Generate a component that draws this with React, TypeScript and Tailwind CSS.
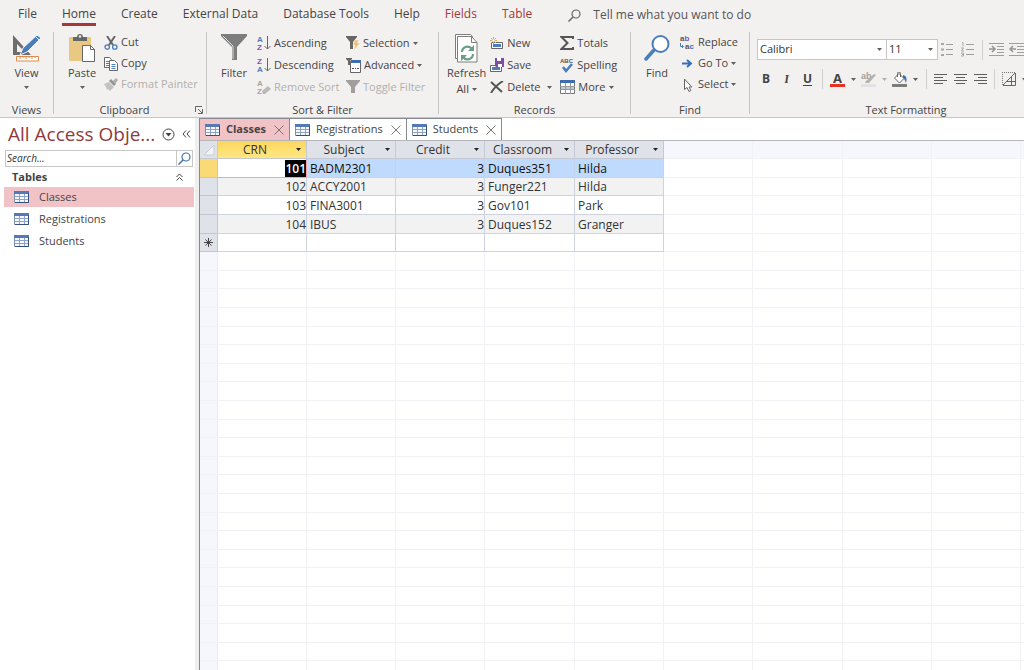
import type { ReactNode } from "react";
import { clsx } from "clsx";

const COLUMNS = ["CRN", "Subject", "Credit", "Classroom", "Professor"];

const COLUMN_WIDTHS = [
  "w-[89px]",
  "w-[89px]",
  "w-[89px]",
  "w-[90px]",
  "w-[89px]",
  "w-[89px]",
  "w-[90px]",
  "w-[89px]",
  "w-[89px]",
  "w-[90px]",
];

const ROW_HEIGHTS = [
  "h-[19px]",
  "h-[18px]",
  "h-[19px]",
  "h-[19px]",
  "h-[18px]",
];

const RECORDS = [
  ["101", "BADM2301", "3", "Duques351", "Hilda"],
  ["102", "ACCY2001", "3", "Funger221", "Hilda"],
  ["103", "FINA3001", "3", "Gov101", "Park"],
  ["104", "IBUS", "3", "Duques152", "Granger"],
];

const OBJECTS = ["Classes", "Registrations", "Students"];

/* ---------- Icons ---------- */

const Svg = ({
  w,
  h,
  children,
}: {
  w: number;
  h: number;
  children: ReactNode;
}) => (
  <svg
    width={w}
    height={h}
    viewBox={`0 0 ${w} ${h}`}
    fill="none"
    className="shrink-0"
    aria-hidden="true"
  >
    {children}
  </svg>
);

const Caret = ({ className = "text-[#605e5c]" }: { className?: string }) => (
  <svg
    width="5"
    height="3"
    viewBox="0 0 5 3"
    fill="currentColor"
    className={clsx("shrink-0", className)}
    aria-hidden="true"
  >
    <path d="M0 0h5L2.5 3z" />
  </svg>
);

const ViewIcon = () => (
  <Svg w={28} h={28}>
    <path d="M0 1v20h18zM4 10l8 8H4z" fill="#6d6d6d" fillRule="evenodd" />
    <path d="M7 21l3-7L24 1l4 3L14 18z" fill="#4a7ebb" stroke="#f3f1f0" />
    <path d="M22 2l4 4" stroke="#f3f1f0" />
    <path d="M3.500 22.500h22v4.500h-22z" fill="#fff" stroke="#dd8a4b" />
    <path d="M7 22v3M10 22v2M13 22v3M16 22v2M19 22v3M22 22v2" stroke="#dd8a4b" />
  </Svg>
);

const PasteIcon = () => (
  <Svg w={28} h={28}>
    <rect x="1" y="3" width="22" height="24" rx="1" fill="#e8c883" />
    <path d="M5 7V3h4c0-4 6-4 6 0h4v4z" fill="#666" />
    <circle cx="12" cy="2.500" r="1.200" fill="#f3f1f0" />
    <path d="M14.500 11.500h8l4 4v12h-12z" fill="#fff" stroke="#666" />
    <path d="M22.500 11.500v4h4" stroke="#666" />
  </Svg>
);

const CutIcon = () => (
  <Svg w={14} h={14}>
    <path d="M3 0l6 9M11 0L5 9" stroke="#666" strokeWidth="2" />
    <circle cx="3.200" cy="11" r="2.200" stroke="#4a7ebb" strokeWidth="1.300" />
    <circle cx="10.800" cy="11" r="2.200" stroke="#4a7ebb" strokeWidth="1.300" />
  </Svg>
);

const CopyIcon = () => (
  <Svg w={14} h={14}>
    <path d="M.5.500h5l2 2v8h-7z" fill="#fff" stroke="#666" />
    <path d="M2 4.500h3M2 6.500h3M2 8.500h3" stroke="#4a7ebb" />
    <path d="M5.500 3.500h5l3 3v7h-8z" fill="#fff" stroke="#666" />
    <path d="M7.500 7.500h4M7.500 9.500h4M7.500 11.500h4" stroke="#4a7ebb" />
  </Svg>
);

const PainterIcon = () => (
  <Svg w={14} h={13}>
    <path d="M0 6l5-2 5 5-4 4-2-2-1 1-1-3z" fill="#c4c2c1" />
    <path d="M5 3l2-2 5 5-2 2z" fill="#979593" />
    <path d="M9 3l3-3 2 2-3 4z" fill="#b0aeac" />
  </Svg>
);

const FunnelIcon = () => (
  <Svg w={26} h={27}>
    <path d="M0 0h26v2L16 13v13h-5V13L0 2z" fill="#7d7d7d" />
    <path d="M2 2l10 10v13" stroke="#ddd" />
  </Svg>
);

const SortIcon = ({ reverse }: { reverse?: boolean }) => (
  <Svg w={14} h={16}>
    <g fontFamily="Liberation Sans" fontSize="8" fontWeight="bold">
      <text x="0" y="7" fill={reverse ? "#8654a8" : "#4a7ebb"}>
        {reverse ? "Z" : "A"}
      </text>
      <text x="0" y="15" fill={reverse ? "#4a7ebb" : "#8654a8"}>
        {reverse ? "A" : "Z"}
      </text>
    </g>
    <path d="M10.500 1v13M7.500 11l3 3 3-3" stroke="#666" />
  </Svg>
);

const RemoveSortIcon = () => (
  <Svg w={14} h={16}>
    <g
      fontFamily="Liberation Sans"
      fontSize="8"
      fontWeight="bold"
      fill="#a5a3a1"
    >
      <text x="0" y="7">
        A
      </text>
      <text x="0" y="15">
        Z
      </text>
    </g>
    <path d="M5 12l6-5 3 3-6 5H6z" fill="#bcbab8" />
  </Svg>
);

const SelectionIcon = () => (
  <Svg w={14} h={14}>
    <path d="M0 0h11v1L7 6v7H4V6L0 1z" fill="#666" />
    <path d="M9 4h4l-2 3h3l-6 7 1-5H7z" fill="#ecc06c" stroke="#f3f1f0" strokeWidth=".5" />
  </Svg>
);

const AdvancedIcon = () => (
  <Svg w={15} h={15}>
    <path d="M0 0h6v1L4 3v4H2V3L0 1z" fill="#666" />
    <path d="M4.500 3.500h10v11h-10z" fill="#fff" stroke="#666" />
    <path d="M5 2h10v3H5z" fill="#3d6fb0" />
    <path d="M6 10.500h2M9 10.500h1M11 10.500h2" stroke="#555" />
  </Svg>
);

const ToggleFilterIcon = () => (
  <Svg w={14} h={14}>
    <path d="M0 0h14v1L9 7v6H5V7L0 1z" fill="#a19f9d" />
  </Svg>
);

const RefreshIcon = () => (
  <Svg w={23} h={29}>
    <path d="M.5.500h15l2 2v22H.5z" fill="#fff" stroke="#7d7d7d" />
    <path d="M2.500 2.500h14l5.500 6v19.500H2.500z" fill="#fff" stroke="#7d7d7d" />
    <path d="M16.500 2.500v6H22" stroke="#7d7d7d" />
    <path d="M7 18a5.500 5.500 0 0 1 10-3M18 20a5.500 5.500 0 0 1-10 3" stroke="#6b9f89" strokeWidth="2.200" />
    <path d="M19 11v6h-6zM6 27v-6h6z" fill="#6b9f89" />
  </Svg>
);

const NewIcon = () => (
  <Svg w={14} h={13}>
    <path d="M1.500 5.500h11v6h-11z" fill="#fff" stroke="#666" />
    <path d="M3 7h8v3H3z" fill="#4a7ebb" />
    <path d="M3.500 0v7M0 3.500h7M1 1l5 5M6 1L1 6" stroke="#e5a94f" />
    <circle cx="3.500" cy="3.500" r="1.200" fill="#fff" />
  </Svg>
);

const SaveIcon = () => (
  <Svg w={14} h={14}>
    <path d="M.5 7.500h11v6H.5z" fill="#fff" stroke="#666" />
    <path d="M2 9h8v3H2z" fill="#4a7ebb" />
    <path d="M5 0h9v9H6L5 8z" fill="#7e4ea3" />
    <path d="M7 0h4v3H7zM8 6h4v3H8z" fill="#fff" />
  </Svg>
);

const DeleteIcon = () => (
  <Svg w={14} h={12}>
    <path d="M1 1l11 10M13 0C8 3 4 7 1 12" stroke="#555" strokeWidth="2" />
  </Svg>
);

const TotalsIcon = () => (
  <Svg w={14} h={14}>
    <path d="M13 3V1H1.500l6 6-6 6H13v-2" stroke="#555" strokeWidth="2" />
  </Svg>
);

const SpellingIcon = () => (
  <Svg w={14} h={15}>
    <text x="0" y="5" fontFamily="Liberation Sans" fontSize="6" fontWeight="bold" fill="#555">
      ABC
    </text>
    <path d="M3 9l3 4 6-7" stroke="#4a7ebb" strokeWidth="2.500" />
  </Svg>
);

const MoreIcon = () => (
  <Svg w={15} h={14}>
    <path d="M.5.500h14v13H.5z" fill="#fff" stroke="#777" />
    <path d="M0 0h15v3H0z" fill="#3d6fb0" />
    <path d="M1 6h13v4H1z" fill="#b5cbe4" />
    <path d="M0 6.500h15M0 9.500h15M5.500 3v11M10.500 3v11" stroke="#999" />
  </Svg>
);

const FindIcon = () => (
  <Svg w={26} h={27}>
    <circle cx="16.500" cy="10" r="8" fill="#fff" stroke="#4a7ebb" strokeWidth="2" />
    <path d="M10 16l-8 9" stroke="#4a7ebb" strokeWidth="3.500" strokeLinecap="round" />
  </Svg>
);

const ReplaceIcon = () => (
  <Svg w={15} h={17}>
    <g fontFamily="Liberation Sans" fontSize="8" fontWeight="bold">
      <text x="0" y="7" fill="#555">
        a<tspan fill="#8654a8">b</tspan>
      </text>
      <text x="5" y="15" fill="#555">
        a<tspan fill="#3d6fb0">c</tspan>
      </text>
    </g>
    <path d="M.5 9v3.500H3M2 11l1.500 1.500L2 14" stroke="#4a7ebb" />
  </Svg>
);

const GoToIcon = () => (
  <Svg w={15} h={9}>
    <path d="M2 4.500h8M7 1l4 3.500L7 8" stroke="#3d6fb0" strokeWidth="2" />
  </Svg>
);

const PointerIcon = () => (
  <Svg w={15} h={14}>
    <path d="M4.500 1v10.500l2.500-2 2 4 1.800-1-1.800-3.500h2.800z" fill="#fff" stroke="#666" />
  </Svg>
);

const LauncherIcon = () => (
  <Svg w={8} h={8}>
    <path d="M.5 6V.5H7M3 3l4 4M7.500 3v4.500H3" stroke="#666" />
  </Svg>
);

const BulletsIcon = () => (
  <Svg w={12} h={15}>
    <path d="M0 2h3M0 7.500h3M0 13h3" stroke="#aaa8a6" strokeWidth="2" />
    <path d="M5 2.500h7M5 7.500h7M5 12.500h7" stroke="#a19f9d" />
  </Svg>
);

const NumberingIcon = () => (
  <Svg w={13} h={15}>
    <path d="M1 .5h1v4M0 6h2.500L.5 9H3M0 11h2.500v3H0M1 12.500h1.500" stroke="#aaa8a6" />
    <path d="M5 2.500h8M5 7.500h8M5 12.500h8" stroke="#a19f9d" />
  </Svg>
);

const IndentIcon = ({ out }: { out?: boolean }) => (
  <Svg w={15} h={13}>
    <path d="M0 .5h15M8 3.500h7M8 6.500h7M8 9.500h7M0 12.500h15" stroke="#a19f9d" />
    <path
      d={out ? "M7 6H1M4 3L1 6l3 3" : "M0 6h6M3 3l3 3-3 3"}
      stroke="#979593"
      strokeWidth="1.500"
    />
  </Svg>
);

const HighlightIcon = () => (
  <Svg w={15} h={15}>
    <text x="0" y="7" fontFamily="Liberation Sans" fontSize="9" fontWeight="bold" fill="#a19f9d">
      ab
    </text>
    <path d="M5 9l8-7 2 1-7 8H4z" fill="#b5b3b1" />
    <path d="M0 12h15v3H0z" fill="#e3e1e6" />
  </Svg>
);

const BucketIcon = () => (
  <Svg w={15} h={15}>
    <path d="M2.500 6L7 1.500l5 5L7.500 11z" fill="#fff" stroke="#666" />
    <path d="M5.500 5V1.500a1.500 1.500 0 0 1 3 0V5" stroke="#666" />
    <path d="M11 3c4 1 4 4 3 8-1-2-1-4-3-5z" fill="#3d6fb0" />
    <path d="M0 12h15v3H0z" fill="#7f7d7b" />
  </Svg>
);

const AlignIcon = ({ side }: { side: "left" | "center" | "right" }) => {
  const path = {
    left: "M0 .5h13M0 3.500h9M0 6.500h13M0 9.500h9",
    center: "M0 .5h13M2 3.500h9M0 6.500h13M2 9.500h9",
    right: "M0 .5h13M4 3.500h9M0 6.500h13M4 9.500h9",
  }[side];
  return (
    <Svg w={13} h={10}>
      <path d={path} stroke="#605e5c" />
    </Svg>
  );
};

const GridlinesIcon = () => (
  <Svg w={14} h={14}>
    <path d="M.5 0v14M0 .5h14" stroke="#777" strokeDasharray="1 1" />
    <path d="M1 13.500h12.500V1M1 13L13 1M9.500 5v8M5 9.500h8" stroke="#666" />
  </Svg>
);

const TableIcon = () => (
  <Svg w={15} h={12}>
    <path d="M.5.500h14v11H.5z" fill="#f4f7fc" stroke="#7d8fae" />
    <path d="M0 0h15v3H0z" fill="#5679b5" />
    <path d="M1 5.500h13M1 8.500h13M5.500 3v8M10.500 3v8" stroke="#8fa3c4" />
    <path d="M14.500 2v9.500H1" stroke="#33507f" />
  </Svg>
);

const MagnifierIcon = ({ color }: { color: string }) => (
  <Svg w={13} h={13}>
    <circle cx="8" cy="5" r="4" stroke={color} strokeWidth="1.200" />
    <path d="M5 8l-4.500 4.500" stroke={color} strokeWidth="1.500" />
  </Svg>
);

const CloseIcon = () => (
  <Svg w={10} h={10}>
    <path d="M.5.500l9 9M9.500.500l-9 9" stroke="#777" />
  </Svg>
);

/* ---------- Ribbon ---------- */

const RibbonTab = ({
  label,
  active,
  contextual,
}: {
  label: string;
  active?: boolean;
  contextual?: boolean;
}) => (
  <button
    className={clsx(
      "h-[26px] border-b-3 pt-1 text-[12px] leading-5 whitespace-nowrap",
      active ? "border-[#a4373a]" : "border-transparent",
      contextual ? "text-[#a4373a]" : "text-[#444]",
    )}
  >
    {label}
  </button>
);

const Group = ({
  label,
  className,
  launcher,
  children,
}: {
  label: string;
  className: string;
  launcher?: boolean;
  children: ReactNode;
}) => (
  <section
    aria-label={label}
    className={clsx("flex shrink-0 flex-col border-[#c8c6c4]", className)}
  >
    <div className="flex flex-1 items-start">{children}</div>
    <div className="flex h-2 items-center justify-center text-[11px] leading-4 whitespace-nowrap text-[#444]">
      <span className={clsx(launcher && "ml-auto")}>{label}</span>
      {launcher && (
        <button className="mr-[3px] ml-auto" aria-label="Clipboard options">
          <LauncherIcon />
        </button>
      )}
    </div>
  </section>
);

const BigButton = ({
  icon,
  label,
  children,
}: {
  icon: ReactNode;
  label: string;
  children?: ReactNode;
}) => (
  <button className="flex flex-col items-center pt-[2px] text-[11px] leading-4 text-[#444]">
    <span className="flex h-[31px] items-start">{icon}</span>
    <span>{label}</span>
    {children}
  </button>
);

const SmallButton = ({
  icon,
  label,
  menu,
  disabled,
  tall,
}: {
  icon: ReactNode;
  label: string;
  menu?: boolean;
  disabled?: boolean;
  tall?: boolean;
}) => (
  <button
    disabled={disabled}
    className={clsx(
      "flex items-center gap-[3px] text-[11px] whitespace-nowrap",
      tall ? "h-[22px]" : "h-[21px]",
      disabled ? "text-[#b1afad]" : "text-[#444]",
    )}
  >
    {icon}
    <span>{label}</span>
    {menu && <Caret />}
  </button>
);

const Divider = () => <span className="h-5 w-px bg-[#d2d0ce]" />;

const FormatButton = ({
  label,
  children,
}: {
  label: string;
  children: ReactNode;
}) => (
  <button aria-label={label} className="flex items-center gap-[6px]">
    {children}
  </button>
);

const FontSelect = ({
  label,
  value,
  className,
}: {
  label: string;
  value: string;
  className: string;
}) => (
  <div
    className={clsx(
      "flex h-[21px] items-center border border-[#c8c6c4] bg-white pr-1",
      className,
    )}
  >
    <select
      aria-label={label}
      className="h-full w-full min-w-0 appearance-none bg-transparent px-[2px] text-[11px] text-[#333]"
    >
      <option>{value}</option>
    </select>
    <Caret />
  </div>
);

const Ribbon = () => (
  <header className="h-[118px] shrink-0 overflow-hidden border-b border-[#c8c6c4] bg-[#f3f1f0]">
    <nav className="flex h-[30px] items-start">
      <div className="flex gap-[25px] pl-[18px]">
        <RibbonTab label="File" />
        <RibbonTab label="Home" active />
        <RibbonTab label="Create" />
        <RibbonTab label="External Data" />
        <RibbonTab label="Database Tools" />
        <RibbonTab label="Help" />
        <RibbonTab label="Fields" contextual />
        <RibbonTab label="Table" contextual />
      </div>
      <label className="flex h-[30px] flex-1 items-center gap-3 pl-9">
        <MagnifierIcon color="#666" />
        <input
          aria-label="Tell me what you want to do"
          placeholder="Tell me what you want to do"
          className="w-60 bg-transparent text-[12px] outline-none placeholder:text-[#555]"
        />
      </label>
    </nav>

    <div className="flex h-[88px] pt-[2px] pb-1">
      <Group label="Views" className="w-[54px] border-r">
        <div className="flex w-full justify-center">
          <BigButton icon={<ViewIcon />} label="View">
            <Caret className="mt-[5px] text-[#605e5c]" />
          </BigButton>
        </div>
      </Group>

      <Group label="Clipboard" className="w-[153px] border-r" launcher>
        <div className="flex gap-2 pl-[14px]">
          <BigButton icon={<PasteIcon />} label="Paste">
            <Caret className="mt-[5px] text-[#605e5c]" />
          </BigButton>
          <div className="flex flex-col items-start">
            <SmallButton icon={<CutIcon />} label="Cut" />
            <SmallButton icon={<CopyIcon />} label="Copy" />
            <SmallButton icon={<PainterIcon />} label="Format Painter" disabled />
          </div>
        </div>
      </Group>

      <Group label="Sort & Filter" className="w-[232px] border-r">
        <div className="flex pl-[14px]">
          <BigButton icon={<FunnelIcon />} label="Filter" />
          <div className="ml-[10px] flex w-[89px] flex-col items-start">
            <SmallButton tall icon={<SortIcon />} label="Ascending" />
            <SmallButton tall icon={<SortIcon reverse />} label="Descending" />
            <SmallButton tall icon={<RemoveSortIcon />} label="Remove Sort" disabled />
          </div>
          <div className="flex flex-col items-start">
            <SmallButton tall icon={<SelectionIcon />} label="Selection" menu />
            <SmallButton tall icon={<AdvancedIcon />} label="Advanced" menu />
            <SmallButton tall icon={<ToggleFilterIcon />} label="Toggle Filter" disabled />
          </div>
        </div>
      </Group>

      <Group label="Records" className="w-[192px] border-r">
        <div className="flex pl-2">
          <BigButton icon={<RefreshIcon />} label="Refresh">
            <span className="flex items-center gap-[3px]">
              All
              <Caret />
            </span>
          </BigButton>
          <div className="ml-1 flex w-[70px] flex-col items-start">
            <SmallButton tall icon={<NewIcon />} label="New" />
            <SmallButton tall icon={<SaveIcon />} label="Save" />
            <div className="flex w-[62px] items-center justify-between">
              <SmallButton tall icon={<DeleteIcon />} label="Delete" />
              <button aria-label="Delete options">
                <Caret />
              </button>
            </div>
          </div>
          <div className="flex flex-col items-start">
            <SmallButton tall icon={<TotalsIcon />} label="Totals" />
            <SmallButton tall icon={<SpellingIcon />} label="Spelling" />
            <SmallButton tall icon={<MoreIcon />} label="More" menu />
          </div>
        </div>
      </Group>

      <Group label="Find" className="w-[119px] border-r">
        <div className="flex gap-[10px] pl-[13px]">
          <BigButton icon={<FindIcon />} label="Find" />
          <div className="flex flex-col items-start">
            <SmallButton icon={<ReplaceIcon />} label="Replace" />
            <SmallButton icon={<GoToIcon />} label="Go To" menu />
            <SmallButton icon={<PointerIcon />} label="Select" menu />
          </div>
        </div>
      </Group>

      <Group label="Text Formatting" className="w-[312px]">
        <div className="flex flex-col gap-2 pt-[7px] pl-[7px]">
          <div className="flex items-center">
            <FontSelect label="Font" value="Calibri" className="w-[130px]" />
            <FontSelect label="Font size" value="11" className="w-[51px] border-l-0" />
            <div className="ml-[3px] flex items-center gap-2">
              <FormatButton label="Bullets">
                <BulletsIcon />
              </FormatButton>
              <FormatButton label="Numbering">
                <NumberingIcon />
              </FormatButton>
              <Divider />
            </div>
            <div className="ml-[6px] flex items-center gap-[5px]">
              <FormatButton label="Increase indent">
                <IndentIcon />
              </FormatButton>
              <FormatButton label="Decrease indent">
                <IndentIcon out />
              </FormatButton>
            </div>
          </div>
          <div className="flex h-[22px] items-center text-[12px] font-bold text-[#444]">
            <div className="flex w-[65px] items-center justify-between pr-[10px] pl-[5px]">
              <button>B</button>
              <button className="font-serif italic">I</button>
              <button className="underline underline-offset-2">U</button>
            </div>
            <Divider />
            <div className="flex items-center gap-[5px] pl-[7px]">
              <FormatButton label="Font color">
                <span className="w-[15px] border-b-3 border-[#e83323] text-[13px] leading-3">
                  A
                </span>
                <Caret />
              </FormatButton>
              <FormatButton label="Highlight">
                <HighlightIcon />
                <Caret className="text-[#b1afad]" />
              </FormatButton>
              <FormatButton label="Background color">
                <BucketIcon />
                <Caret />
              </FormatButton>
            </div>
            <div className="flex items-center gap-[7px] pl-2">
              <Divider />
              <FormatButton label="Align left">
                <AlignIcon side="left" />
              </FormatButton>
              <FormatButton label="Center">
                <AlignIcon side="center" />
              </FormatButton>
              <FormatButton label="Align right">
                <AlignIcon side="right" />
              </FormatButton>
              <Divider />
              <FormatButton label="Gridlines">
                <GridlinesIcon />
                <Caret />
              </FormatButton>
            </div>
          </div>
        </div>
      </Group>
    </div>
  </header>
);

/* ---------- Navigation pane ---------- */

const NavigationPane = () => (
  <aside className="w-[200px] shrink-0 border-r border-[#868a91] bg-[#f0eff0] pr-1">
    <div className="h-full bg-white">
      <div className="flex h-8 items-center pl-2">
        <h1 className="flex-1 text-[19px] leading-8 whitespace-nowrap text-[#8f3b3d]">
          All Access Obje...
        </h1>
        <button aria-label="Choose category" className="mr-[7px]">
          <Svg w={13} h={13}>
            <circle cx="6.500" cy="6.500" r="5.500" fill="#fff" stroke="#444" />
            <path d="M3.500 5h6l-3 3.500z" fill="#444" />
          </Svg>
        </button>
        <button aria-label="Collapse pane" className="mr-1">
          <Svg w={9} h={8}>
            <path d="M4 .5L1 4l3 3.500M8 .5L5 4l3 3.500" stroke="#444" />
          </Svg>
        </button>
      </div>
      <div className="mr-[2px] ml-[5px] flex h-[17px] border border-[#c6c6c6]">
        <input
          type="text"
          aria-label="Search"
          placeholder="Search..."
          className="min-w-0 flex-1 px-[1px] text-[10px] italic outline-none placeholder:text-[#333]"
        />
        <button
          aria-label="Search objects"
          className="flex w-4 items-center justify-center border-l border-[#c6c6c6]"
        >
          <MagnifierIcon color="#4472a8" />
        </button>
      </div>
      <button className="flex h-5 w-full items-center justify-between pr-3 pl-3 text-[11px] font-bold text-[#444]">
        Tables
        <Svg w={7} h={8}>
          <path d="M.5 4l3-3 3 3M.5 7.500l3-3 3 3" stroke="#444" />
        </Svg>
      </button>
      <ul className="mr-[1px] ml-1 flex flex-col gap-[2px]">
        {OBJECTS.map((name, i) => (
          <li key={name}>
            <button
              className={clsx(
                "flex h-5 w-full items-center gap-[10px] pl-[10px] text-[11px] text-[#444]",
                i === 0 && "bg-[#f2c3c6]",
              )}
            >
              <TableIcon />
              {name}
            </button>
          </li>
        ))}
      </ul>
    </div>
  </aside>
);

/* ---------- Datasheet ---------- */

const DocumentTabs = () => (
  <div className="flex h-[23px] shrink-0 border-b border-[#b4b6ba] bg-white text-[11px] text-[#444]">
    {OBJECTS.map((name, i) => (
      <div
        key={name}
        className={clsx(
          "flex items-center gap-[6px] border-t border-r border-[#868a91] px-[5px]",
          i === 0 && "bg-[#f2c3c6] font-bold",
        )}
      >
        <TableIcon />
        <button>{name}</button>
        <button aria-label={`Close ${name}`} className="ml-[2px]">
          <CloseIcon />
        </button>
      </div>
    ))}
  </div>
);

// Empty sheet grid that shows around and below the records.
const SheetGrid = () => (
  <div
    aria-hidden="true"
    className="flex min-h-0 flex-col overflow-hidden [grid-area:1/1]"
  >
    {Array.from({ length: 60 }, (_, row) => (
      <div
        key={row}
        className={clsx(
          "flex shrink-0 border-b border-[#f2f2f6]",
          row === 0 ? "h-[18px] bg-[#f5f7fc]" : ROW_HEIGHTS[(row - 1) % 5],
        )}
      >
        <span className="w-[18px] shrink-0 border-r border-[#ececf2] bg-[#f5f7fc]" />
        {Array.from({ length: 20 }, (_, col) => (
          <span
            key={col}
            className={clsx(
              "shrink-0 border-r border-[#f2f2f6]",
              COLUMN_WIDTHS[col % COLUMN_WIDTHS.length],
            )}
          />
        ))}
      </div>
    ))}
  </div>
);

const HeaderCell = ({ name, active }: { name: string; active: boolean }) => (
  <th
    className={clsx(
      "border-r border-b border-[#c5c9d3] p-0 font-normal",
      active ? "bg-linear-to-b from-[#fbd65c] to-[#ffe784]" : "bg-[#dfe2e8]",
    )}
  >
    <div className="flex items-center pr-[5px]">
      <span className="flex-1 pr-1 text-center">{name}</span>
      <button aria-label={`Filter ${name}`}>
        <Caret className="text-[#222]" />
      </button>
    </div>
  </th>
);

const Datasheet = () => (
  <div className="grid min-h-0 flex-1 grid-cols-[minmax(0,1fr)] grid-rows-[minmax(0,1fr)] overflow-hidden bg-white">
    <SheetGrid />
    <table className="w-[464px] table-fixed border-separate border-spacing-0 self-start text-[12px] leading-[17px] text-[#333] [grid-area:1/1]">
      <colgroup>
        <col className="w-[18px]" />
        {COLUMNS.map((name, i) => (
          <col key={name} className={COLUMN_WIDTHS[i]} />
        ))}
      </colgroup>
      <thead>
        <tr className="h-[18px]">
          <th className="border-r border-b border-[#c5c9d3] bg-[#dfe2e8] p-0">
            <div className="flex justify-center">
              <Svg w={12} h={12}>
                <path d="M11 1v10H1z" fill="#f1f3f6" stroke="#c8ccd4" />
              </Svg>
            </div>
          </th>
          {COLUMNS.map((name, i) => (
            <HeaderCell key={name} name={name} active={i === 0} />
          ))}
        </tr>
      </thead>
      <tbody>
        {RECORDS.map((record, r) => (
          <tr
            key={record[0]}
            className={clsx(
              ROW_HEIGHTS[r],
              r === 0 ? "bg-[#bfdafd] text-[#111]" : r % 2 ? "bg-[#f2f2f2]" : "bg-white",
            )}
          >
            <td
              className={clsx(
                "border-r border-b border-[#c3c6cf] p-0",
                r === 0 ? "bg-[#f9da76]" : "bg-[#dfe2e8]",
              )}
            />
            {record.map((value, c) => {
              const numeric = c === 0 || c === 2;
              const current = r === 0 && c === 0;
              return (
                <td
                  key={c}
                  className={clsx(
                    "border-r border-b py-0",
                    numeric ? "pr-0 pl-1 text-right" : "pr-1 pl-[3px]",
                    current
                      ? "border-[#f0a5aa] bg-white"
                      : r === 0
                        ? "border-[#c3d3ee]"
                        : "border-[#cfd3e0]",
                  )}
                >
                  {current ? (
                    <span className="inline-block bg-black font-semibold text-white">
                      {value}
                    </span>
                  ) : (
                    value
                  )}
                </td>
              );
            })}
          </tr>
        ))}
        <tr className="h-[18px] bg-white">
          <td className="border-r border-b border-[#c3c6cf] bg-[#dfe2e8] p-0">
            <div className="flex justify-center">
              <Svg w={9} h={9}>
                <path d="M4.500 0v9M0 4.500h9M1.500 1.500l6 6M7.500 1.500l-6 6" stroke="#444" />
              </Svg>
            </div>
          </td>
          {COLUMNS.map((name) => (
            <td key={name} className="border-r border-b border-[#cfd3e0] p-0" />
          ))}
        </tr>
      </tbody>
    </table>
  </div>
);

export default function App() {
  return (
    <div className="flex h-screen flex-col overflow-hidden bg-white font-['Open_Sans','Noto_Sans',sans-serif]">
      <Ribbon />
      <main className="flex min-h-0 flex-1">
        <NavigationPane />
        <div className="flex min-w-0 flex-1 flex-col">
          <DocumentTabs />
          <Datasheet />
        </div>
      </main>
    </div>
  );
}
